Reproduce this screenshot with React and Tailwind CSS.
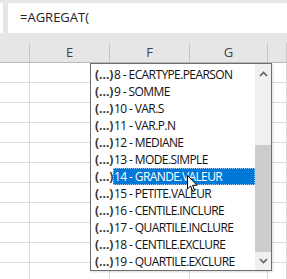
import React from "react";

const items = [
  "8 - ECARTYPE.PEARSON",
  "9 - SOMME",
  "10 - VAR.S",
  "11 - VAR.P.N",
  "12 - MEDIANE",
  "13 - MODE.SIMPLE",
  "14 - GRANDE.VALEUR",
  "15 - PETITE.VALEUR",
  "16 - CENTILE.INCLURE",
  "17 - QUARTILE.INCLURE",
  "18 - CENTILE.EXCLURE",
  "19 - QUARTILE.EXCLURE",
];

const cols = [
  { w: "w-[30px]", l: "" },
  { w: "w-[80px]", l: "E" },
  { w: "w-[80px]", l: "F" },
  { w: "w-[78px]", l: "G" },
  { w: "flex-1", l: "" },
];

export default function App() {
  return (
    <div
      className="relative w-[287px] h-[279px] overflow-hidden bg-white"
      style={{ fontFamily: '"Open Sans", "Noto Sans", sans-serif' }}
    >
      {/* formula bar */}
      <div className="flex h-[43px] bg-[#e6e6e6]">
        <div className="mt-[3px] h-[30px] w-[3px] bg-white" />
        <div className="ml-[5px] mt-[3px] flex h-[30px] flex-1 items-center bg-white pl-[12px] text-[13px] text-[#222]">
          =AGREGAT(
        </div>
      </div>
      {/* header row */}
      <div className="flex h-[20px] border-b border-[#b8b8b8] bg-[#e6e6e6]">
        {cols.map((c, i) => (
          <div
            key={i}
            className={`${c.w} flex items-center justify-center border-r border-[#c6c6c6] text-[13px] text-[#444]`}
          >
            {c.l}
          </div>
        ))}
      </div>
      {/* grid */}
      {Array.from({ length: 11 }).map((_, r) => (
        <div key={r} className="flex h-[20px] border-b border-[#dadada]">
          {cols.map((c, i) => (
            <div key={i} className={`${c.w} border-r border-[#dadada]`} />
          ))}
        </div>
      ))}

      {/* dropdown */}
      <div
        className="absolute left-[90px] top-[63px] flex h-[208px] w-[182px] border border-[#6e6e6e] bg-white shadow-[1px_1px_2px_rgba(0,0,0,0.15)]"
        style={{ fontFamily: '"Open Sans", sans-serif' }}
      >
        <div className="flex flex-1 flex-col pt-[2px]">
          {items.map((t, i) => {
            const sel = i === 6;
            return (
              <div key={t} className="flex h-[17px] items-center">
                <span className="w-[22px] pl-[4px] text-[12px] font-bold leading-none whitespace-nowrap text-[#333]">
                  (...)
                </span>
                <span
                  className={`flex h-[17px] flex-1 items-center whitespace-nowrap pl-[1px] text-[12px] leading-none tracking-[-0.6px] ${
                    sel
                      ? "bg-[#0078d7] text-white outline-1 outline-dotted outline-[#9cc8ef] -outline-offset-1"
                      : "text-[#111]"
                  }`}
                >
                  {t}
                </span>
              </div>
            );
          })}
        </div>
        {/* scrollbar */}
        <div className="flex w-[16px] flex-col bg-[#f0f0f0]">
          <div className="flex h-[19px] items-center justify-center">
            <svg width="9" height="6" viewBox="0 0 9 6">
              <path d="M1 5 L4.5 1.5 L8 5" stroke="#606060" strokeWidth="1.6" fill="none" />
            </svg>
          </div>
          <div className="h-[62px]" />
          <div className="h-[107px] bg-[#cdcdcd]" />
          <div className="flex flex-1 items-center justify-center">
            <svg width="9" height="6" viewBox="0 0 9 6">
              <path d="M1 1 L4.5 4.5 L8 1" stroke="#606060" strokeWidth="1.6" fill="none" />
            </svg>
          </div>
        </div>
      </div>

      {/* mouse cursor */}
      <svg
        className="absolute left-[187px] top-[175px]"
        width="12"
        height="18"
        viewBox="0 0 12 18"
      >
        <path
          d="M0.5 0.5 L0.5 14 L3.6 11 L5.8 16.5 L7.8 15.7 L5.6 10.3 L10 10.3 Z"
          fill="white"
          stroke="black"
          strokeWidth="1"
          strokeLinejoin="round"
        />
      </svg>
    </div>
  );
}
